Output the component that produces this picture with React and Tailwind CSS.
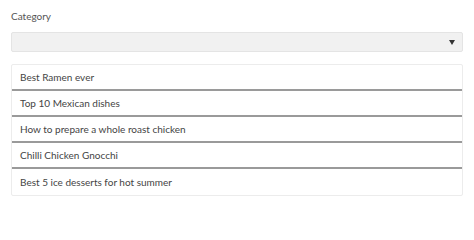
const items = [
  "Best Ramen ever",
  "Top 10 Mexican dishes",
  "How to prepare a whole roast chicken",
  "Chilli Chicken Gnocchi",
  "Best 5 ice desserts for hot summer",
];

const App = () => {
  return (
    <div className="h-[215px] w-[474px] bg-white px-[11px] pt-[9px] text-[10px] text-[#555] [font-family:Lato,sans-serif]">
      <label className="block leading-[15px]">Category</label>
      <div className="mt-[8px] flex h-[20px] items-center justify-end rounded-[2px] border border-[#e4e4e4] bg-[#f1f1f1] pr-[7px]">
        <span className="h-0 w-0 border-x-[3.5px] border-t-[5px] border-x-transparent border-t-[#333]" />
      </div>
      <ul className="mt-[12px] rounded-[2px] border border-[#ececec]">
        {items.map((item, i) => (
          <li
            key={item}
            className={
              "flex h-[26px] items-center px-[8px] text-[#444] " +
              (i < items.length - 1 ? "border-b-2 border-[#9a9a9a]" : "")
            }
          >
            {item}
          </li>
        ))}
      </ul>
    </div>
  );
};

export default App;
